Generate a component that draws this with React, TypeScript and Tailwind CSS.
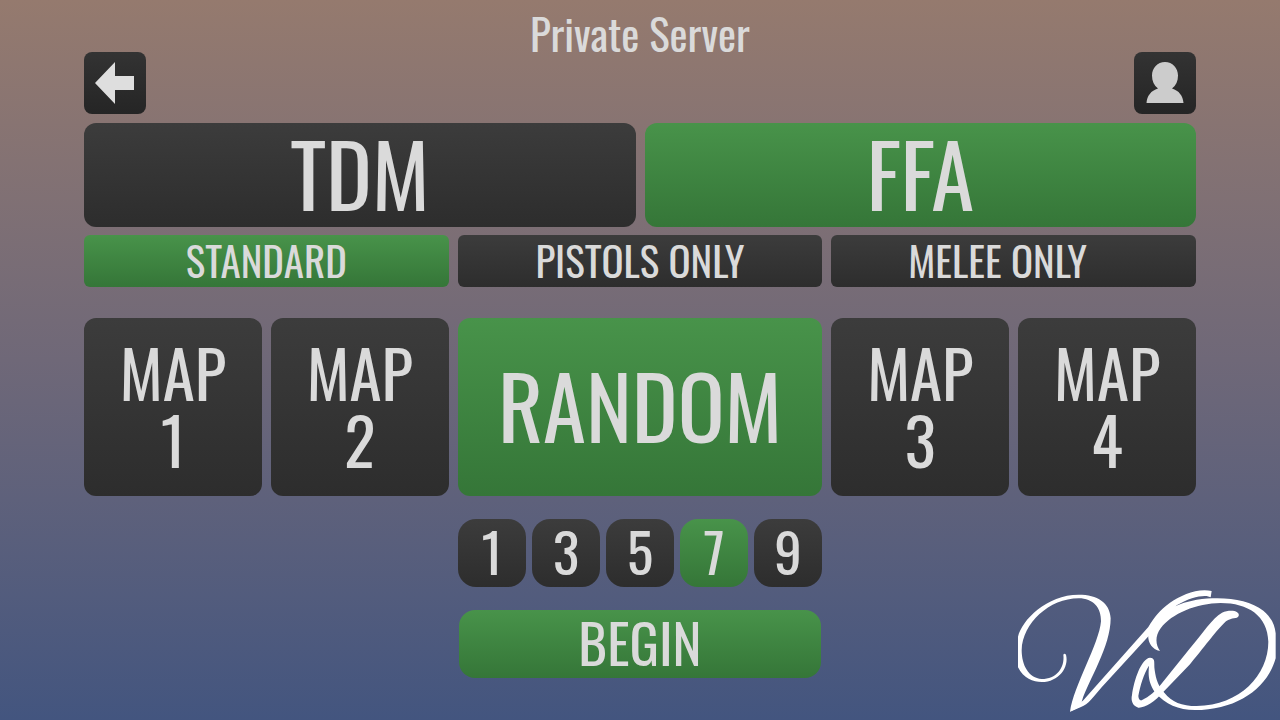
import { useState } from "react";
import clsx from "clsx";

const MODES = ["TDM", "FFA"];
const RULES = ["STANDARD", "PISTOLS ONLY", "MELEE ONLY"];
const MAPS = ["MAP 1", "MAP 2", "RANDOM", "MAP 3", "MAP 4"];
const COUNTS = ["1", "3", "5", "7", "9"];

const GREEN = "bg-linear-to-b from-[#48934a] to-[#357638]";
const DARK = "bg-linear-to-b from-[#3c3c3c] to-[#2d2d2d]";

function OptionButton({
  label,
  active,
  onClick,
  className,
}: {
  label: string;
  active: boolean;
  onClick: () => void;
  className?: string;
}) {
  return (
    <button
      type="button"
      aria-pressed={active}
      onClick={onClick}
      className={clsx("flex items-center justify-center text-center", active ? GREEN : DARK, className)}
    >
      {label}
    </button>
  );
}

export default function App() {
  const [mode, setMode] = useState("FFA");
  const [rules, setRules] = useState("STANDARD");
  const [map, setMap] = useState("RANDOM");
  const [count, setCount] = useState("7");

  return (
    <div className="relative min-h-screen overflow-hidden bg-linear-to-b from-[#957a6e] via-[#6f6878] to-[#43557f] px-[84px] font-['Oswald','Liberation_Sans_Narrow','Roboto',sans-serif] text-[#dadada]">
      <header className="flex h-[114px] items-end justify-between">
        <button
          type="button"
          aria-label="Back"
          className="flex size-[62px] items-center justify-center rounded-lg bg-linear-to-b from-[#333333] to-[#252525]"
        >
          <svg viewBox="0 0 40 42" className="w-10" fill="#dedede">
            <path d="M0 21 20 0v14h19v14H20v14Z" />
          </svg>
        </button>
        <h1 className="self-start pt-2 text-[43px] leading-[50px]">Private Server</h1>
        <button
          type="button"
          aria-label="Profile"
          className="flex size-[62px] items-center justify-center rounded-lg bg-linear-to-b from-[#333333] to-[#252525]"
        >
          <svg viewBox="0 0 38 42" className="w-[38px]" fill="#cccccc">
            <path d="M19 0c7.500 0 13 6 13 13.500 0 5.500-2 10-6 13C33 28.500 37 34 37.500 41H.5C1 34 5 28.500 12 26.500c-4-3-6-7.500-6-13C6 6 11.500 0 19 0Z" />
          </svg>
        </button>
      </header>

      <main className="pt-[9px]">
        <div className="grid grid-cols-2 gap-[9px]">
          {MODES.map((m) => (
            <OptionButton
              key={m}
              label={m}
              active={mode === m}
              onClick={() => setMode(m)}
              className="h-[104px] rounded-xl pb-2 text-[87px] leading-none"
            />
          ))}
        </div>

        <div className="mt-2 grid grid-cols-3 gap-[9px]">
          {RULES.map((r) => (
            <OptionButton
              key={r}
              label={r}
              active={rules === r}
              onClick={() => setRules(r)}
              className={clsx("h-[52px] rounded-md pb-1 text-[41px] leading-none", r === "MELEE ONLY" && "pr-8")}
            />
          ))}
        </div>

        <div className="mt-[31px] grid grid-cols-6 gap-[9px]">
          {MAPS.map((m) => (
            <OptionButton
              key={m}
              label={m}
              active={map === m}
              onClick={() => setMap(m)}
              className={clsx(
                "h-[178px] rounded-xl",
                m === "RANDOM" ? "col-span-2 pb-2 text-[87px] leading-none" : "px-6 pb-1 text-[65px] leading-[67px]",
              )}
            />
          ))}
        </div>

        <div className="mt-[23px] flex justify-center gap-1.5">
          {COUNTS.map((c) => (
            <OptionButton
              key={c}
              label={c}
              active={count === c}
              onClick={() => setCount(c)}
              className="size-[68px] rounded-[18px] pb-1.5 text-[55px] leading-none"
            />
          ))}
        </div>

        <button
          type="button"
          className={clsx("mx-auto mt-[23px] flex h-[68px] w-[362px] items-center justify-center rounded-2xl pb-1.5 text-[55px] leading-none", GREEN)}
        >
          BEGIN
        </button>
      </main>

      <Monogram />
    </div>
  );
}

// Calligraphic studio mark, pinned over the bottom right corner
function Monogram() {
  return (
    <svg
      viewBox="0 0 810 420"
      role="img"
      aria-label="VD"
      className="absolute right-0 bottom-0 w-[270px]"
      fill="#ffffff"
    >
      {/* opening curl and downstroke */}
      <path d="M160 224C165 264 138 297 95 297C56 294 35 256 35 210C38 130 118 55 206 55C250 55 274 84 273 124C268 190 190 320 180 395L213 379L216 362C236 300 302 200 302 115C300 68 262 44 206 44C110 44 36 120 24 170V262C40 295 70 306 95 306C146 306 178 262 168 224C165 220 162 220 160 224Z" />
      {/* hairline upstroke and flag */}
      <path d="M180 395L213 381C235 374 250 350 275 322L425 158L475 104L500 76C535 54 570 46 590 48L602 52L605 33C560 24 515 46 480 68C450 90 432 112 415 141L220 361Z" />
      {/* bowl */}
      <path d="M450 213C420 205 409 180 417 146C432 105 490 72 560 59C640 48 715 57 760 92C783 112 794 132 797 160V235C772 325 680 390 555 390C505 390 466 372 436 338C413 306 415 280 417 257L420 234C434 234 432 250 434 270C438 300 446 320 463 338C485 366 515 378 560 378C690 376 775 285 775 185C773 107 714 69 632 69C560 70 485 100 452 145C434 170 437 195 450 213Z" />
      {/* slanted stem and lower loop */}
      <path d="M395 361C418 350 437 333 452 314L540 205C580 157 606 116 636 98C660 87 691 92 686 108C681 118 666 111 648 124C615 156 597 184 540 253L462 334C432 368 405 384 385 383C368 378 362 362 366 345C372 300 394 235 420 233C436 234 433 247 432 262L417 257C402 280 390 318 385 348C386 358 389 362 395 361Z" />
    </svg>
  );
}
